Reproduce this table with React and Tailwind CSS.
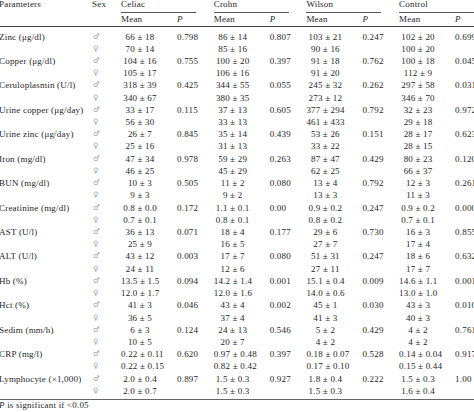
import React from 'react'

const groups = ['Celiac', 'Crohn', 'Wilson', 'Control']

const rows = [
  ['Zinc (μg/dl)', [['66 ± 18', '70 ± 14', '0.798'], ['86 ± 14', '85 ± 16', '0.807'], ['103 ± 21', '90 ± 16', '0.247'], ['102 ± 20', '100 ± 20', '0.699']]],
  ['Copper (μg/dl)', [['104 ± 16', '105 ± 17', '0.755'], ['100 ± 20', '106 ± 16', '0.397'], ['91 ± 18', '91 ± 20', '0.762'], ['100 ± 18', '112 ± 9', '0.045']]],
  ['Ceruloplasmin (U/l)', [['318 ± 39', '340 ± 67', '0.425'], ['344 ± 55', '380 ± 35', '0.055'], ['245 ± 32', '273 ± 12', '0.262'], ['297 ± 58', '346 ± 70', '0.031']]],
  ['Urine copper (μg/day)', [['33 ± 17', '56 ± 30', '0.115'], ['37 ± 13', '33 ± 13', '0.605'], ['377 ± 294', '461 ± 433', '0.792'], ['32 ± 23', '29 ± 18', '0.972']]],
  ['Urine zinc (μg/day)', [['26 ± 7', '25 ± 16', '0.845'], ['35 ± 14', '31 ± 13', '0.439'], ['53 ± 26', '33 ± 22', '0.151'], ['28 ± 17', '28 ± 15', '0.623']]],
  ['Iron (mg/dl)', [['47 ± 34', '46 ± 25', '0.978'], ['59 ± 29', '45 ± 29', '0.263'], ['87 ± 47', '62 ± 25', '0.429'], ['80 ± 23', '66 ± 37', '0.120']]],
  ['BUN (mg/dl)', [['10 ± 3', '9 ± 3', '0.505'], ['11 ± 2', '9 ± 2', '0.080'], ['13 ± 4', '13 ± 3', '0.792'], ['12 ± 3', '11 ± 3', '0.261']]],
  ['Creatinine (mg/dl)', [['0.8 ± 0.0', '0.7 ± 0.1', '0.172'], ['1.1 ± 0.1', '0.8 ± 0.1', '0.00'], ['0.9 ± 0.2', '0.8 ± 0.2', '0.247'], ['0.9 ± 0.2', '0.7 ± 0.1', '0.000']]],
  ['AST (U/l)', [['36 ± 13', '25 ± 9', '0.071'], ['18 ± 4', '16 ± 5', '0.177'], ['29 ± 6', '27 ± 7', '0.730'], ['16 ± 3', '17 ± 4', '0.855']]],
  ['ALT (U/l)', [['43 ± 12', '24 ± 11', '0.003'], ['17 ± 7', '12 ± 6', '0.080'], ['51 ± 31', '27 ± 11', '0.247'], ['18 ± 6', '17 ± 7', '0.632']]],
  ['Hb (%)', [['13.5 ± 1.5', '12.0 ± 1.7', '0.094'], ['14.2 ± 1.4', '12.0 ± 1.6', '0.001'], ['15.1 ± 0.4', '14.0 ± 0.6', '0.009'], ['14.6 ± 1.1', '13.0 ± 1.0', '0.001']]],
  ['Hct (%)', [['41 ± 3', '36 ± 5', '0.046'], ['43 ± 4', '37 ± 4', '0.002'], ['45 ± 1', '41 ± 3', '0.030'], ['43 ± 3', '40 ± 3', '0.010']]],
  ['Sedim (mm/h)', [['6 ± 3', '10 ± 5', '0.124'], ['24 ± 13', '20 ± 7', '0.546'], ['5 ± 2', '4 ± 2', '0.429'], ['4 ± 2', '4 ± 2', '0.761']]],
  ['CRP (mg/l)', [['0.22 ± 0.11', '0.22 ± 0.15', '0.620'], ['0.97 ± 0.48', '0.82 ± 0.42', '0.397'], ['0.18 ± 0.07', '0.17 ± 0.10', '0.528'], ['0.14 ± 0.04', '0.15 ± 0.44', '0.917']]],
  ['Lymphocyte (×1,000)', [['2.0 ± 0.4', '2.0 ± 0.7', '0.897'], ['1.5 ± 0.3', '1.5 ± 0.3', '0.927'], ['1.8 ± 0.4', '1.5 ± 0.3', '0.222'], ['1.5 ± 0.3', '1.6 ± 0.4', '1.00']]],
]

const cols = 'grid grid-cols-[93px_29px_56px_36.7px_56px_36.7px_56px_36.7px_56px_36.7px]'

function Row({ label, sex, data, idx }) {
  return (
    <div className={`${cols} h-[12.23px] leading-[12px] whitespace-nowrap`}>
      <div>{label}</div>
      <div className="text-[#a0a0a0] text-[7.5px] pl-[1px] tracking-normal font-['DejaVu_Sans',sans-serif]">{sex}</div>
      {data.map((g, i) => (
        <React.Fragment key={i}>
          <div className="w-[38px] text-center">{g[idx]}</div>
          <div>{idx === 0 ? g[2] : ''}</div>
        </React.Fragment>
      ))}
    </div>
  )
}

export default function App() {
  return (
    <div className="w-[474px] h-[412px] overflow-hidden bg-white text-[#262626] text-[9px] tracking-[0.2px] font-['Liberation_Serif',serif]">
      <div className="ml-[-1px] w-[500px]">
        {/* header */}
        <div className={`${cols} h-[14px] mt-[-1px] leading-[11px]`}>
          <div>Parameters</div>
          <div>Sex</div>
          {groups.map(g => (
            <div key={g} className="col-span-2">
              <div className="w-[75px] h-[14px] border-b border-[#555]">{g}</div>
            </div>
          ))}
        </div>
        <div className={`${cols} h-[14px] leading-[12px] border-b-[1.5px] border-[#444]`}>
          <div></div>
          <div></div>
          {groups.map(g => (
            <React.Fragment key={g}>
              <div>Mean</div>
              <div className="italic">P</div>
            </React.Fragment>
          ))}
        </div>

        {/* body */}
        <div className="pt-[3.5px] pb-[2px] border-b-[1.5px] border-[#666]">
          {rows.map(([label, data]) => (
            <React.Fragment key={label}>
              <Row label={label} sex="♂" data={data} idx={0} />
              <Row label="" sex="♀" data={data} idx={1} />
            </React.Fragment>
          ))}
        </div>

        <div className="leading-[10px]">
          <span className="italic">P</span> is significant if &lt;0.05
        </div>
      </div>
    </div>
  )
}
